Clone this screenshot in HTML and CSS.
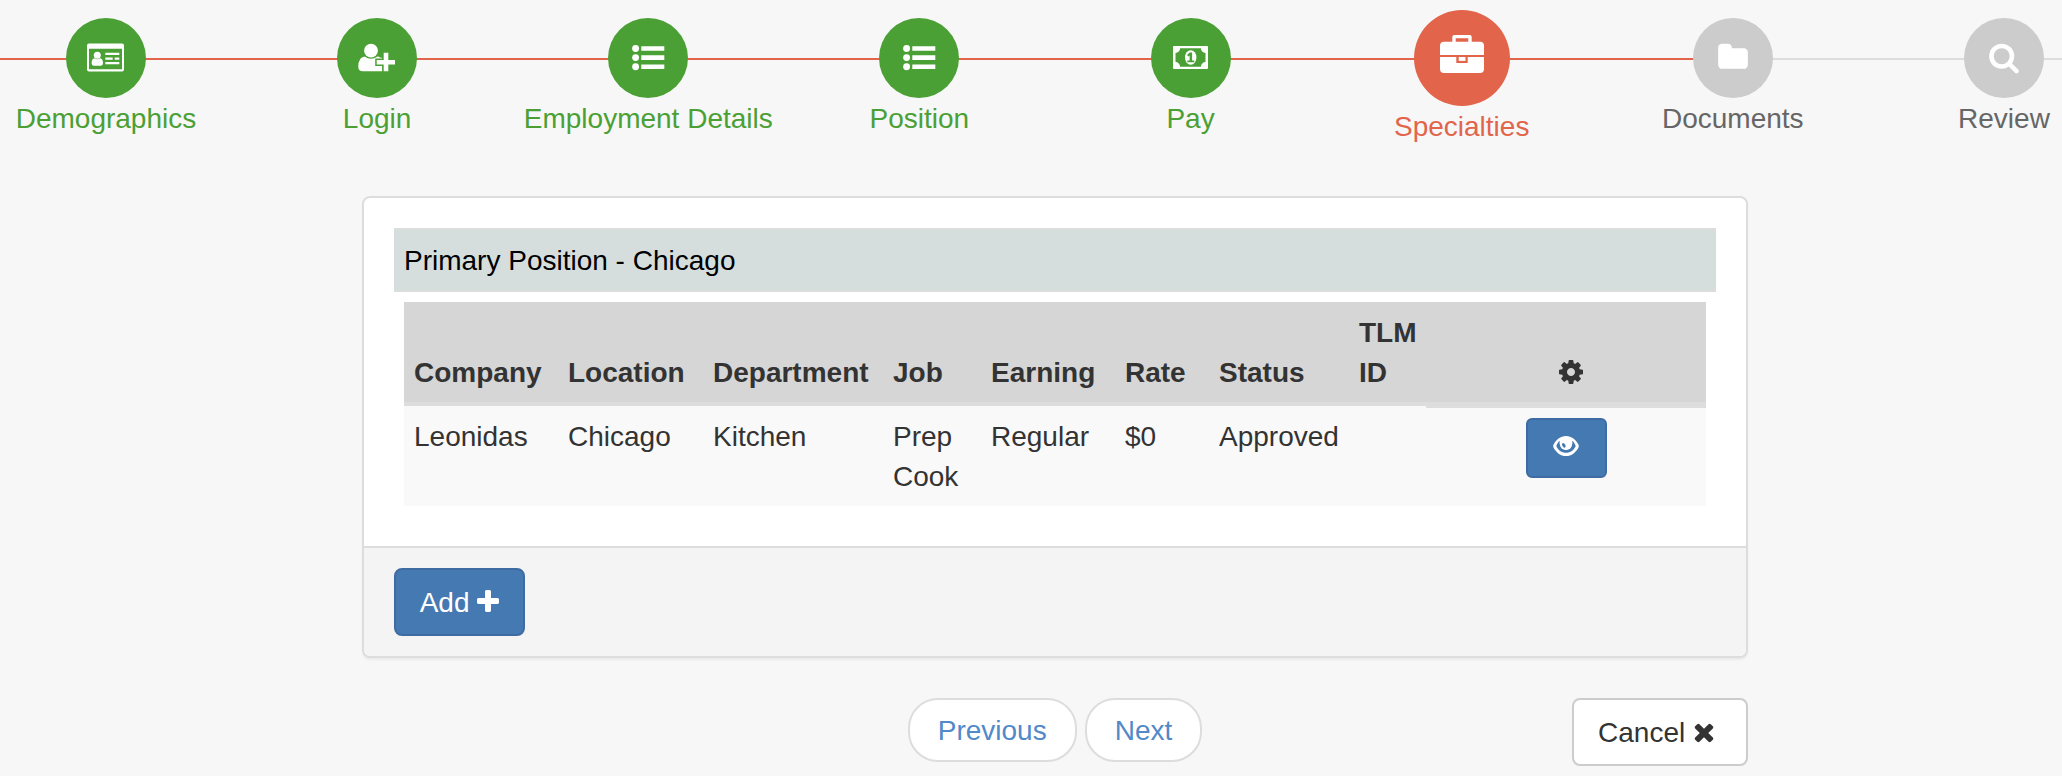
FILE: index.html
```html
<!DOCTYPE html>
<html lang="en">
<head>
  <meta charset="UTF-8">
  <meta name="viewport" content="width=device-width, initial-scale=1.0">
  <title>Specialties</title>
  <link rel="stylesheet" href="styles.css">
</head>
<body>
  <ul class="steps">
    <li class="step done">
      <span class="circle">
        <svg viewBox="0 0 80 80">
          <path fill-rule="evenodd" d="M23 25.4h33a2 2 0 0 1 2 2v24.200a2 2 0 0 1-2 2H23a2 2 0 0 1-2-2V27.400a2 2 0 0 1 2-2zM23 30.800V51.200H56V30.800z"/>
          <circle cx="31.300" cy="37.200" r="3.500"/>
          <path d="M28.500 40.300q2.800 2 5.600 0q2.900.5 2.900 5q0 2.400-2 2.400h-7.400q-2 0-2-2.400q0-4.500 2.900-5z"/>
          <path d="M39.300 34.800h14v2.300h-14zM39.300 39.400h7.400v2.300h-7.400zM48.700 39.400h4.600v2.300h-4.600zM39.300 43.900h14v2.300h-14z"/>
        </svg>
      </span>
      <span class="label">Demographics</span>
    </li>
    <li class="step done">
      <span class="circle">
        <svg viewBox="0 0 80 80">
          <circle cx="34" cy="32.700" r="6.900"/>
          <path d="M27.600 38.400q6.400 4.600 12.800 0q1.600 0 3 1.300h2v13.600H26q-4.700 0-4.700-4.500q0-9.800 6.300-10.400z"/>
          <path class="gap" d="M46.700 34.700h4.600V42H58v4.500h-6.700v6.800h-4.600v-6.800h-7V42h7z"/>
          <path d="M46.700 34.700h4.600V42H58v4.500h-6.700v6.800h-4.600v-6.800h-7V42h7z"/>
        </svg>
      </span>
      <span class="label">Login</span>
    </li>
    <li class="step done">
      <span class="circle">
        <svg viewBox="0 0 80 80">
          <circle cx="27.600" cy="30.500" r="3.450"/><circle cx="27.600" cy="39.600" r="3.450"/><circle cx="27.600" cy="48.700" r="3.450"/>
          <path d="M33.300 28.200h23v4.600h-23zM33.300 37.300h23v4.600h-23zM33.300 46.400h23v4.600h-23z"/>
        </svg>
      </span>
      <span class="label">Employment Details</span>
    </li>
    <li class="step done">
      <span class="circle">
        <svg viewBox="0 0 80 80">
          <circle cx="27.600" cy="30.500" r="3.450"/><circle cx="27.600" cy="39.600" r="3.450"/><circle cx="27.600" cy="48.700" r="3.450"/>
          <path d="M33.300 28.200h23v4.600h-23zM33.300 37.300h23v4.600h-23zM33.300 46.400h23v4.600h-23z"/>
        </svg>
      </span>
      <span class="label">Position</span>
    </li>
    <li class="step done">
      <span class="circle">
        <svg viewBox="0 0 80 80">
          <path fill-rule="evenodd" d="M23 28h33a1 1 0 0 1 1 1v21a1 1 0 0 1-1 1H23a1 1 0 0 1-1-1V29a1 1 0 0 1 1-1zM29.100 30.300a4.600 4.600 0 0 1-4.600 4.600v9.200a4.600 4.600 0 0 1 4.600 4.600h20.800a4.600 4.600 0 0 1 4.600-4.600v-9.200a4.600 4.600 0 0 1-4.600-4.600z"/>
          <ellipse cx="39.700" cy="39.500" rx="5.700" ry="7.300"/>
          <path class="cut" d="M38.700 34.500h2.400v7.900h2.200v1.900h-7v-1.900h2.300v-4.900l-1.200 1-1.300-1.400z"/>
        </svg>
      </span>
      <span class="label">Pay</span>
    </li>
    <li class="step active">
      <span class="circle">
        <svg viewBox="0 0 96 96">
          <path fill-rule="evenodd" d="M40.300 25h15.400a2 2 0 0 1 2 2v4.700H66a4 4 0 0 1 4 4V45H26v-9.300a4 4 0 0 1 4-4h8.300V27a2 2 0 0 1 2-2zM41.700 28.300v3.400h12.600v-3.400z"/>
          <path d="M26 47h16.300v6h11.400v-6H70v12a4 4 0 0 1-4 4H30a4 4 0 0 1-4-4z"/>
          <path d="M44.700 47h6.800v3.900h-6.800z"/>
        </svg>
      </span>
      <span class="label">Specialties</span>
    </li>
    <li class="step">
      <span class="circle">
        <svg viewBox="0 0 80 80">
          <path transform="translate(24 23.400) scale(.017857)" d="M1728 608v704q0 92-66 158t-158 66h-1216q-92 0-158-66t-66-158v-960q0-92 66-158t158-66h320q92 0 158 66t66 158v32h672q92 0 158 66t66 158z"/>
        </svg>
      </span>
      <span class="label">Documents</span>
    </li>
    <li class="step">
      <span class="circle">
        <svg viewBox="0 0 80 80">
          <path transform="translate(24 23.400) scale(.017857)" d="M1216 832q0-185-131.500-316.500t-316.500-131.500-316.500 131.500-131.500 316.500 131.500 316.500 316.500 131.500 316.500-131.500 131.500-316.500zm512 832q0 52-38 90t-90 38q-54 0-90-38l-343-342q-179 124-399 124-143 0-273.500-55.500t-225-150-150-225-55.500-273.500 55.500-273.500 150-225 225-150 273.500-55.500 273.500 55.500 225 150 150 225 55.500 273.500q0 220-124 399l343 343q37 37 37 90z"/>
        </svg>
      </span>
      <span class="label">Review</span>
    </li>
  </ul>

  <div class="container">
    <div class="panel">
      <div class="panel-body">
        <div class="position-title">Primary Position - Chicago</div>
        <div class="position-table">
          <table>
            <colgroup>
              <col class="col-company"><col class="col-location"><col class="col-department">
              <col class="col-job"><col class="col-earning"><col class="col-rate">
              <col class="col-status"><col class="col-tlm"><col>
            </colgroup>
            <thead>
              <tr>
                <th>Company</th>
                <th>Location</th>
                <th>Department</th>
                <th>Job</th>
                <th>Earning</th>
                <th>Rate</th>
                <th>Status</th>
                <th>TLM ID</th>
                <th class="actions">
                  <svg class="icon-cog" viewBox="128 128 1536 1536"><path d="M1152 896q0-106-75-181t-181-75-181 75-75 181 75 181 181 75 181-75 75-181zm512-109v222q0 12-8 23t-20 13l-185 28q-19 54-39 91 35 50 107 138 10 12 10 25t-9 23q-27 37-99 108t-94 71q-12 0-26-9l-138-108q-44 23-91 38-16 136-29 186-7 28-36 28h-222q-14 0-24.500-8.500t-11.500-21.500l-28-184q-49-16-90-37l-141 107q-10 9-25 9-14 0-25-11-126-114-165-168-7-10-7-23 0-12 8-23 15-21 51-66.500t54-70.500q-27-50-41-99l-183-27q-13-2-21-12.500t-8-23.500v-222q0-12 8-23t19-13l186-28q14-46 39-92-40-57-107-138-10-12-10-24 0-10 9-23 26-36 98.500-107.500t94.500-71.500q13 0 26 10l138 107q44-23 91-38 16-136 29-186 7-28 36-28h222q14 0 24.500 8.500t11.500 21.500l28 184q49 16 90 37l142-107q9-9 24-9 13 0 25 10 129 119 165 170 7 8 7 22 0 12-8 23-15 21-51 66.500t-54 70.500q26 50 41 98l183 28q13 2 21 12.500t8 23.500z"/></svg>
                </th>
              </tr>
            </thead>
            <tbody>
              <tr>
                <td>Leonidas</td>
                <td>Chicago</td>
                <td>Kitchen</td>
                <td>Prep Cook</td>
                <td>Regular</td>
                <td>$0</td>
                <td>Approved</td>
                <td></td>
                <td class="actions">
                  <button class="btn btn-primary btn-view" aria-label="View">
                    <svg viewBox="0 0 26 20">
                      <path fill-rule="evenodd" d="M13 0C18.500 0 23 3.500 25.600 8.800Q26 10 25.600 11.200C23 16.500 18.500 20 13 20S3 16.500 .4 11.200Q0 10 .4 8.800C3 3.500 7.500 0 13 0zM6.600 4.800C5 6.200 4 8 3.300 10C5 14 8.500 16.800 13 16.800S21 14 22.700 10C22 8 21 6.200 19.400 4.800Q20 12.500 13 14Q6 12.500 6.600 4.800z"/>
                      <circle cx="13" cy="7.800" r="6.200"/>
                      <ellipse class="cut" cx="10.800" cy="9.300" rx="1.500" ry="2.500" transform="rotate(-30 10.800 9.300)"/>
                    </svg>
                  </button>
                </td>
              </tr>
            </tbody>
          </table>
        </div>
      </div>
      <div class="panel-footer">
        <button class="btn btn-primary btn-add">Add <svg class="icon" viewBox="192 128 1408 1408"><path d="M1600 736v192q0 40-28 68t-68 28h-416v416q0 40-28 68t-68 28h-192q-40 0-68-28t-28-68v-416h-416q-40 0-68-28t-28-68v-192q0-40 28-68t68-28h416v-416q0-40 28-68t68-28h192q40 0 68 28t28 68v416h416q40 0 68 28t28 68z"/></svg></button>
      </div>
    </div>

    <div class="actions-bar">
      <div class="pager">
        <a href="#">Previous</a>
        <a href="#">Next</a>
      </div>
      <button class="btn btn-default">Cancel <svg class="icon" viewBox="192 128 1408 1408"><path d="M1490 1322q0 40-28 68l-136 136q-28 28-68 28t-68-28l-294-294-294 294q-28 28-68 28t-68-28l-136-136q-28-28-28-68t28-68l294-294-294-294q-28-28-28-68t28-68l136-136q28-28 68-28t68 28l294 294 294-294q28-28 68-28t68 28l136 136q28 28 28 68t-28 68l-294 294 294 294q28 28 28 68z"/></svg></button>
    </div>
  </div>
</body>
</html>
```

FILE: styles.css
```css
:root { --green: #4ba035; --orange: #e2654b; --blue: #4579b1; --blue-border: #3e6ca2; --grey: #ccc; --border: #ddd; --text: #333; }
* { box-sizing: border-box; }
body { margin: 0; font-family: "Liberation Sans", Arial, sans-serif; font-size: 28px; line-height: 40px; color: var(--text); background: #f7f7f7; overflow: hidden; }
svg { fill: currentColor; overflow: visible; }

/* wizard steps, first and last run past the window edge */
.steps { display: grid; grid-template-columns: repeat(8, 271.150px); height: 186px; margin: 0 0 10px -29.600px; padding: 0; list-style: none; }
.step { --tone: var(--grey); position: relative; display: flex; flex-direction: column; align-items: center; padding-top: 18px; color: #666; }
.step::before { content: ""; position: absolute; z-index: -1; top: 58px; right: 50%; width: 100%; height: 2px; background: var(--orange); }
.step:last-child::before { right: 0; width: 150%; background: var(--border); }
.circle { width: 80px; height: 80px; border-radius: 50%; background: var(--tone); color: #fff; }
.circle svg { display: block; width: 100%; height: 100%; }
.circle .gap { fill: none; stroke: var(--tone); stroke-width: 3; }
.circle .cut { fill: var(--tone); }
.label { padding-top: 1px; white-space: nowrap; }
.step.done { --tone: var(--green); color: var(--green); }
.step.active { --tone: var(--orange); padding-top: 10px; color: var(--orange); }
.step.active .circle { width: 96px; height: 96px; }

.container { width: 1386px; margin-left: 362px; }
.panel { border: 2px solid var(--border); border-radius: 8px; background: #fff; box-shadow: 0 2px 2px rgba(0, 0, 0, 0.05); }
.panel-body { padding: 30px; }
.panel-footer { padding: 20px 30px; border-top: 2px solid var(--border); border-radius: 0 0 6px 6px; background: #f4f4f4; }
.position-title { padding: 11px 10px 9px; border: solid var(--border); border-width: 2px 0; background: #d5dedd; color: #000; }
.position-table { padding: 10px; }

table { width: 100%; table-layout: fixed; border-spacing: 0; }
th, td { padding: 11px 10px 9px; text-align: left; vertical-align: top; }
th { vertical-align: bottom; background: #d6d6d6; border-bottom: 4px solid var(--border); }
td { background: #f9f9f9; }
th.actions, td.actions { text-align: center; }
th.actions { padding-left: 20px; }
td.actions { border-top: 2px solid var(--border); padding-top: 10px; padding-bottom: 0; }
.col-company { width: 154px; }
.col-location { width: 145px; }
.col-department { width: 180px; }
.col-job { width: 98px; }
.col-earning { width: 134px; }
.col-rate { width: 94px; }
.col-status { width: 140px; }
.col-tlm { width: 77px; }
.icon-cog { width: 24px; height: 24px; vertical-align: -2px; }

.btn { display: block; padding: 13px 24px 11px; border: 2px solid; border-radius: 8px; font: inherit; }
.btn-primary { border-color: var(--blue-border); background: var(--blue); color: #fff; }
.btn-default { border-color: #ccc; background: #fff; color: var(--text); padding-right: 31px; }
.btn-add { width: 131px; padding-right: 23px; padding-left: 23px; white-space: nowrap; }
.btn .icon { width: 22px; height: 22px; vertical-align: baseline; }
.btn-view { width: 81px; height: 60px; margin: 0 auto; padding: 0 0 4px; border-radius: 6px; line-height: 0; }
.btn-view svg { width: 26px; height: 20px; }
.btn-view .cut { fill: var(--blue); }

.actions-bar { display: grid; grid-template-columns: 1fr auto 1fr; align-items: start; margin-top: 40px; }
.pager { grid-column: 2; display: flex; gap: 8px; }
.pager a { padding: 11px 28px 9px; border: 2px solid var(--border); border-radius: 30px; background: #fff; color: #5289c8; text-decoration: none; }
.actions-bar .btn { justify-self: end; }
```
